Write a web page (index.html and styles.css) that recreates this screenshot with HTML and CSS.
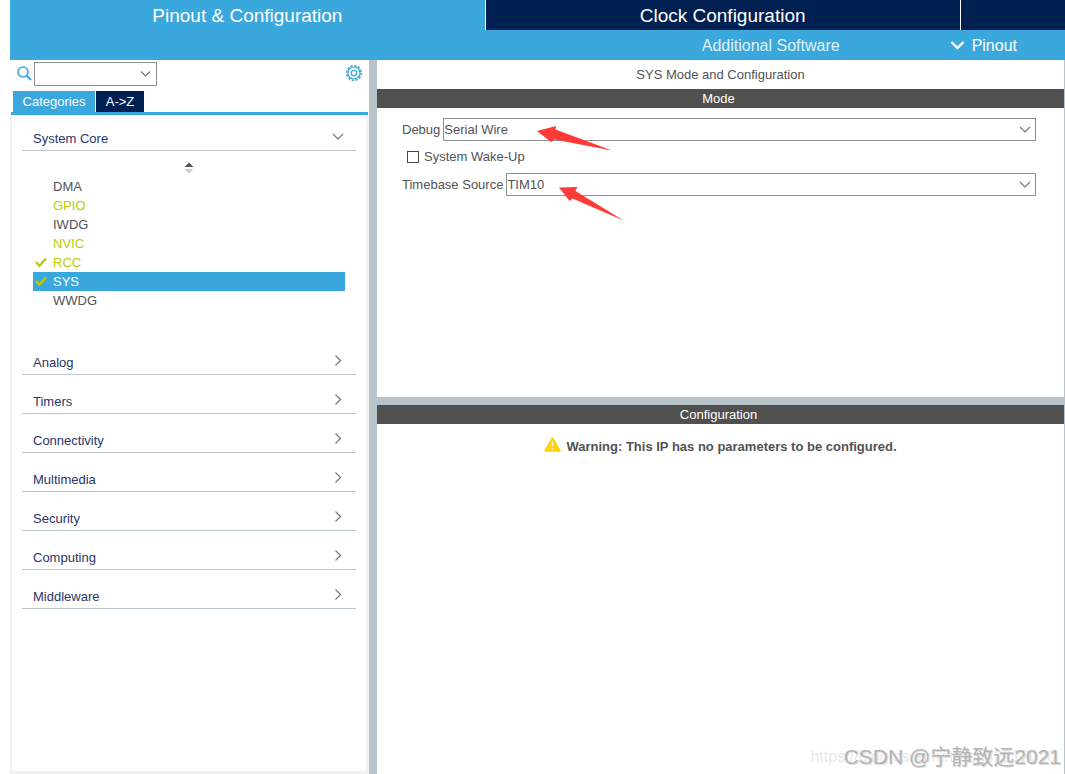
FILE: index.html
```html
<!DOCTYPE html>
<html lang="en">
<head>
    <meta charset="UTF-8">
    <meta name="viewport" content="width=device-width, initial-scale=1.0">
    <title>Pinout &amp; Configuration</title>
    <link rel="stylesheet" href="styles.css">
</head>
<body>
    <div class="app">
        <nav class="main-tabs">
            <button class="main-tab active">Pinout &amp; Configuration</button>
            <button class="main-tab">Clock Configuration</button>
            <button class="main-tab" aria-label="More"></button>
        </nav>
        <div class="sub-bar">
            <button class="sub-item light">Additional Software</button>
            <button class="sub-item">
                <svg width="15" height="10" viewBox="0 0 15 10"><path d="M1.500 2 L7.500 8 L13.500 2" fill="none" stroke="#fff" stroke-width="2.400"/></svg>
                Pinout
            </button>
        </div>

        <div class="workspace">
            <aside class="sidebar">
                <div class="search-row">
                    <svg class="search-icon" width="16" height="16" viewBox="0 0 16 16" fill="none" stroke="#3aa8dc"><circle cx="6" cy="6" r="5" stroke-width="1.600"/><path d="M9.700 9.700 L14 14" stroke-width="2"/></svg>
                    <div class="combo search-combo">
                        <select aria-label="Search"><option></option></select>
                        <svg class="arrow" width="12" height="8" viewBox="0 0 12 8"><path d="M1 1.500 L5.500 6 L10 1.500"/></svg>
                    </div>
                    <button class="gear" aria-label="Settings">
                        <svg width="18" height="18" viewBox="-9 -9 18 18" fill="none" stroke="#3aa8dc">
                            <circle r="7.300" stroke-width="1.600" stroke-dasharray="2.300 1.522"/>
                            <circle r="6" stroke-width="1.200"/>
                            <circle r="2.700" stroke-width="1.300"/>
                        </svg>
                    </button>
                </div>

                <div class="view-tabs">
                    <button class="view-tab active">Categories</button>
                    <button class="view-tab">A-&gt;Z</button>
                </div>

                <div class="categories">
                    <button class="category">System Core <svg width="12" height="12" viewBox="0 0 12 12"><path d="M1 4 L6 9 L11 4"/></svg></button>
                    <div class="ip-list">
                        <svg class="sorter" width="10" height="12" viewBox="0 0 10 12"><path d="M0.500 5 L5 0.500 L9.500 5 Z" fill="#555"/><path d="M0.500 7 L5 11.500 L9.500 7 Z" fill="#ccc"/></svg>
                        <ul>
                            <li>DMA</li>
                            <li class="used">GPIO</li>
                            <li>IWDG</li>
                            <li class="used">NVIC</li>
                            <li class="used"><svg class="check" width="12" height="11" viewBox="0 0 12 11"><path d="M1 5 L4.500 8.700 L11 1.500"/></svg>RCC</li>
                            <li class="selected"><svg class="check" width="12" height="11" viewBox="0 0 12 11"><path d="M1 5 L4.500 8.700 L11 1.500"/></svg>SYS</li>
                            <li>WWDG</li>
                        </ul>
                    </div>
                    <button class="category">Analog <svg width="12" height="12" viewBox="0 0 12 12"><path d="M3.500 1.500 L8.500 6.500 L3.500 11.500"/></svg></button>
                    <button class="category">Timers <svg width="12" height="12" viewBox="0 0 12 12"><path d="M3.500 1.500 L8.500 6.500 L3.500 11.500"/></svg></button>
                    <button class="category">Connectivity <svg width="12" height="12" viewBox="0 0 12 12"><path d="M3.500 1.500 L8.500 6.500 L3.500 11.500"/></svg></button>
                    <button class="category">Multimedia <svg width="12" height="12" viewBox="0 0 12 12"><path d="M3.500 1.500 L8.500 6.500 L3.500 11.500"/></svg></button>
                    <button class="category">Security <svg width="12" height="12" viewBox="0 0 12 12"><path d="M3.500 1.500 L8.500 6.500 L3.500 11.500"/></svg></button>
                    <button class="category">Computing <svg width="12" height="12" viewBox="0 0 12 12"><path d="M3.500 1.500 L8.500 6.500 L3.500 11.500"/></svg></button>
                    <button class="category">Middleware <svg width="12" height="12" viewBox="0 0 12 12"><path d="M3.500 1.500 L8.500 6.500 L3.500 11.500"/></svg></button>
                </div>
            </aside>

            <main class="content">
                <section class="mode">
                    <h1>SYS Mode and Configuration</h1>
                    <h2>Mode</h2>
                    <form class="mode-form">
                        <div class="field">
                            <label for="debug">Debug</label>
                            <div class="combo">
                                <select id="debug"><option>Serial Wire</option></select>
                                <svg class="arrow" width="12" height="8" viewBox="0 0 12 8"><path d="M1 1 L6 6 L11 1"/></svg>
                                <svg class="pointer pointer-debug" width="76" height="26" viewBox="0 0 76 26"><path d="M0 6 L19 1 L18.500 4.500 L75 25.500 L17 14.500 L14 17 Z"/></svg>
                            </div>
                        </div>
                        <div class="field check-field">
                            <input type="checkbox" id="wakeup">
                            <label for="wakeup">System Wake-Up</label>
                        </div>
                        <div class="field">
                            <label for="timebase">Timebase Source</label>
                            <div class="combo">
                                <select id="timebase"><option>TIM10</option></select>
                                <svg class="arrow" width="12" height="8" viewBox="0 0 12 8"><path d="M1 1 L6 6 L11 1"/></svg>
                                <svg class="pointer pointer-timebase" width="66" height="36" viewBox="0 0 66 36"><path d="M0 1.500 L18.500 1 L16.500 5 L64.500 34.500 L13.500 12.500 L10.500 15 Z"/></svg>
                            </div>
                        </div>
                    </form>
                </section>

                <section class="config">
                    <h2>Configuration</h2>
                    <p class="warning">
                        <svg width="17" height="15" viewBox="0 0 17 15"><path d="M8.500 1 L16 14 L1 14 Z" fill="#ffd200" stroke="#ffd200" stroke-width="1.600" stroke-linejoin="round"/><path d="M8.500 4.500 V9.500 M8.500 11 V12.500" stroke="#fff" stroke-width="1.400"/></svg>
                        Warning: This IP has no parameters to be configured.
                    </p>
                </section>
            </main>
        </div>

        <div class="watermark-url">https://blog.csdn.net/qq_42212020</div>
        <div class="watermark">CSDN @宁静致远2021</div>
    </div>
</body>
</html>
```
FILE: styles.css
```css
* {
    box-sizing: border-box;
}

body {
    margin: 0;
    background: #fff;
    color: #525355;
    font-family: "Liberation Sans", "Noto Sans CJK SC", sans-serif;
    font-size: 13px;
    line-height: 19px;
}

button, select {
    font: inherit;
    color: inherit;
    border: none;
    border-radius: 0;
    background: none;
    padding: 0;
}

svg {
    display: block;
    flex: none;
}

.app {
    display: flex;
    flex-direction: column;
    min-height: 100vh;
    padding-left: 10px;
    position: relative;
}

/* Top tabs */
.main-tabs {
    display: flex;
    height: 30px;
    background: #3aa8dc;
}

.main-tab {
    width: 45%;
    background: #002052;
    color: #fff;
    font-size: 19px;
    border-left: 1px solid #fff;
}

.main-tab.active {
    background: #3aa8dc;
    border-left: none;
}

.main-tab:last-child {
    width: 10%;
}

.sub-bar {
    display: flex;
    justify-content: flex-end;
    gap: 110px;
    height: 30px;
    padding-right: 48px;
    background: #3aa8dc;
}

.sub-item {
    display: flex;
    align-items: center;
    gap: 7px;
    color: #fff;
    font-size: 16px;
}

.sub-item.light {
    color: #e0f2fa;
}

.workspace {
    display: flex;
    flex: 1;
}

/* Left side */
.sidebar {
    display: flex;
    flex-direction: column;
    width: 359px;
}

.search-row {
    display: flex;
    align-items: center;
    height: 31px;
    padding: 0 6px 4px 7px;
}

.combo {
    position: relative;
    flex: 1;
}

.combo select {
    display: block;
    width: 100%;
    height: 23px;
    padding: 0 24px 0 0;
    border: 1px solid #8a9297;
    background: #fff;
    appearance: none;
}

.combo .arrow {
    position: absolute;
    right: 5px;
    top: 8px;
    pointer-events: none;
}

.arrow path, .category path {
    fill: none;
    stroke: #777;
    stroke-width: 1.2;
}

.search-combo {
    flex: none;
    width: 123px;
    margin-left: 1px;
}

.search-combo select {
    height: 24px;
}

.gear {
    margin-left: auto;
    padding-bottom: 2px;
}

.view-tabs {
    display: flex;
    gap: 1px;
    height: 24px;
    margin: 0 1px;
    padding-left: 2px;
    border-bottom: 3px solid #3aa8dc;
}

.view-tab {
    width: 48px;
    background: #002052;
    color: #fff;
}

.view-tab.active {
    width: 82px;
    background: #3aa8dc;
}

.categories {
    flex: 1;
    padding: 0 10px;
    border: solid #f2f2f2;
    border-width: 0 3px 3px 2px;
}

.category {
    display: flex;
    align-items: center;
    justify-content: space-between;
    width: 100%;
    height: 39px;
    padding: 14px 12px 0 11px;
    border-bottom: 1px solid #b8c3ca;
    color: #2a3566;
}

.category:first-child {
    height: 36px;
    padding-top: 11px;
}

.category svg {
    margin-bottom: 4px;
}

.ip-list {
    padding: 11px 11px 26px;
}

.sorter {
    margin: 0 auto 3px;
}

.ip-list ul {
    margin: 0;
    padding: 0;
    list-style: none;
}

.ip-list li {
    position: relative;
    padding-left: 20px;
}

.ip-list .used {
    color: #bbcc00;
}

.ip-list .selected {
    background: #3aa8dc;
    color: #fff;
}

.check {
    position: absolute;
    left: 2px;
    top: 4px;
}

.check path {
    fill: none;
    stroke: #bbcc00;
    stroke-width: 2.4;
}

/* Right side */
.content {
    display: flex;
    flex: 1;
    flex-direction: column;
    border-left: 8px solid #b8c3ca;
    border-right: 1px solid #b8c3ca;
}

.mode {
    flex: 337;
    border-bottom: 8px solid #b8c3ca;
}

.config {
    flex: 369;
}

h1, h2 {
    margin: 0;
    font-size: 13px;
    font-weight: normal;
    text-align: center;
}

h1 {
    padding: 5px;
}

h2 {
    padding-right: 4px;
    background: #50514f;
    color: #fff;
}

.mode-form {
    padding: 10px 28px 0 25px;
}

.field {
    display: flex;
    align-items: center;
    gap: 3px;
    height: 23px;
}

.check-field {
    height: 32px;
    padding: 0 0 1px 5px;
    gap: 5px;
}

.check-field input {
    width: 12px;
    height: 12px;
    margin: 0;
    border: 1px solid #444;
    appearance: none;
}

.check-field input:checked {
    background: #3aa8dc;
}

.pointer {
    position: absolute;
    fill: #ff3b38;
    pointer-events: none;
}

.pointer-debug {
    left: 94px;
    top: 7px;
}

.pointer-timebase {
    left: 53px;
    top: 13px;
}

.warning {
    display: flex;
    justify-content: center;
    gap: 5px;
    margin: 13px 0;
    font-weight: bold;
}

/* Watermarks over the bottom right corner */
.watermark, .watermark-url {
    position: absolute;
    white-space: nowrap;
    pointer-events: none;
}

.watermark {
    right: 4px;
    bottom: 4px;
    color: #b4b4b4;
    font-size: 21px;
    line-height: 26px;
    text-shadow: 1px 1px 0 #ddd;
}

.watermark-url {
    right: 9px;
    bottom: 8px;
    color: #e8e8e8;
    font-size: 16px;
}
```
